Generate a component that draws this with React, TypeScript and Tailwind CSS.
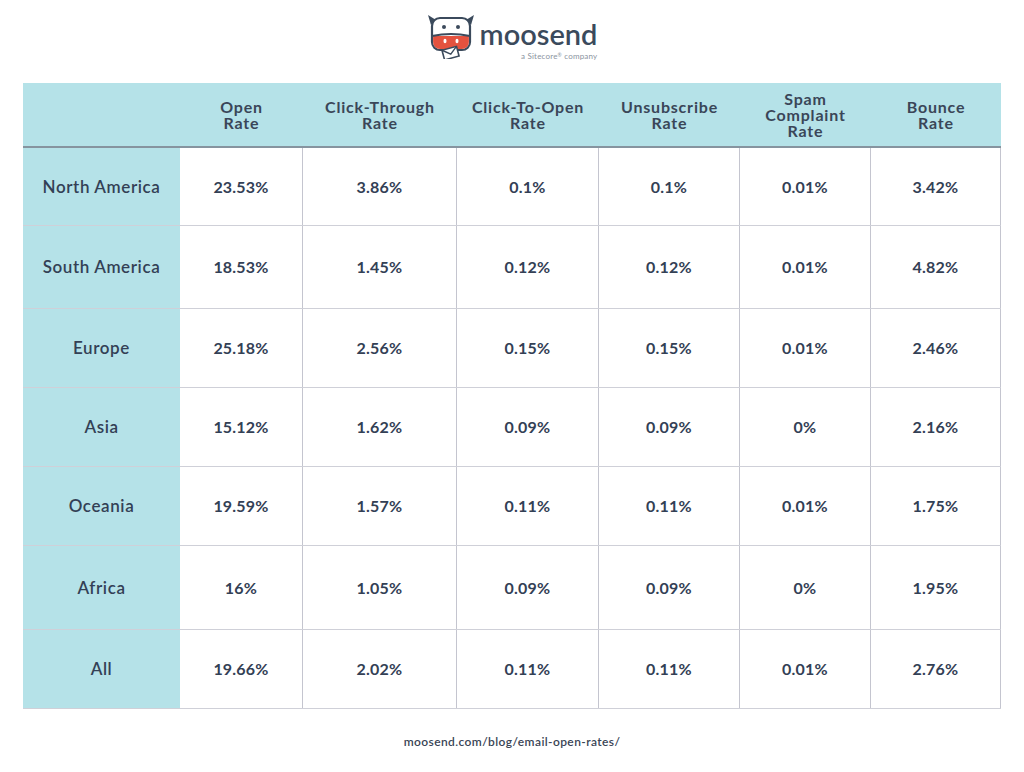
import React from 'react';

const cols = ['w-[157px]', 'w-[123px]', 'w-[154px]', 'w-[142px]', 'w-[141px]', 'w-[131px]', 'w-[130px]'];

const headers = [
  '',
  'Open\nRate',
  'Click-Through\nRate',
  'Click-To-Open\nRate',
  'Unsubscribe\nRate',
  'Spam\nComplaint\nRate',
  'Bounce\nRate',
];

const rows: { h: string; cells: string[] }[] = [
  { h: 'h-[78px]', cells: ['North America', '23.53%', '3.86%', '0.1%', '0.1%', '0.01%', '3.42%'] },
  { h: 'h-[83px]', cells: ['South America', '18.53%', '1.45%', '0.12%', '0.12%', '0.01%', '4.82%'] },
  { h: 'h-[79px]', cells: ['Europe', '25.18%', '2.56%', '0.15%', '0.15%', '0.01%', '2.46%'] },
  { h: 'h-[79px]', cells: ['Asia', '15.12%', '1.62%', '0.09%', '0.09%', '0%', '2.16%'] },
  { h: 'h-[79px]', cells: ['Oceania', '19.59%', '1.57%', '0.11%', '0.11%', '0.01%', '1.75%'] },
  { h: 'h-[84px]', cells: ['Africa', '16%', '1.05%', '0.09%', '0.09%', '0%', '1.95%'] },
  { h: 'h-[79px]', cells: ['All', '19.66%', '2.02%', '0.11%', '0.11%', '0.01%', '2.76%'] },
];

const CowLogo = () => (
  <svg width="48" height="46" viewBox="0 0 48 46" fill="none">
    {/* ears */}
    <path d="M9 7 L1 2 L4 12 Z" fill="#3b4a5c" />
    <path d="M39 7 L47 2 L44 12 Z" fill="#3b4a5c" />
    {/* head */}
    <rect x="5" y="5" width="38" height="32" rx="8" fill="#fff" stroke="#3b4a5c" strokeWidth="2.2" />
    {/* muzzle */}
    <path d="M6.1 23 H41.9 V29 a7 7 0 0 1 -7 7 H13.1 a7 7 0 0 1 -7 -7 Z" fill="#e4523f" />
    <path d="M5 23 Q24 19 43 23" stroke="#3b4a5c" strokeWidth="2" fill="none" />
    {/* eyes */}
    <circle cx="17" cy="14" r="2" fill="#3b4a5c" />
    <circle cx="31" cy="14" r="2" fill="#3b4a5c" />
    {/* nostrils */}
    <ellipse cx="18" cy="28" rx="1.5" ry="2.2" fill="#fff" />
    <ellipse cx="30" cy="28" rx="1.5" ry="2.2" fill="#fff" />
    {/* envelope */}
    <g transform="rotate(-15 24 40)">
      <rect x="16" y="35" width="15" height="10" fill="#fff" stroke="#3b4a5c" strokeWidth="1.6" />
      <path d="M16 35 L23.5 41 L31 35" stroke="#3b4a5c" strokeWidth="1.4" fill="none" />
    </g>
  </svg>
);

export default function App() {
  return (
    <div className="w-[1024px] h-[772px] bg-white font-['Lato','Noto_Sans',sans-serif] text-[#2e3a4d]">
      <div className="flex justify-center pt-[13px] h-[83px]">
        <div className="flex items-start gap-[5px] ml-[0px]">
          <CowLogo />
          <div className="flex flex-col items-end pt-[6px]">
            <span className="text-[29px] leading-[29px] font-semibold text-[#3b4a5c]">moosend</span>
            <span className="text-[8px] leading-[10px] text-[#8a93a0] mt-[3px] tracking-[0.2px]">a Sitecore<sup className="text-[5px]">®</sup> company</span>
          </div>
        </div>
      </div>

      <div className="ml-[23px] w-[978px]">
        <div className="flex h-[65px] bg-[#b5e2e8] border-b-2 border-[#86949f]">
          {headers.map((t, i) => (
            <div key={i} className={`${cols[i]} flex items-center justify-center text-center whitespace-pre-line text-[16px] leading-[16px] font-bold tracking-[0.8px] text-[#3a4658] pt-[1px]`}>
              {t}
            </div>
          ))}
        </div>
        {rows.map((r, ri) => (
          <div key={ri} className={`flex ${r.h} border-b border-[#cfd0d8]`}>
            {r.cells.map((c, ci) => (
              <div
                key={ci}
                className={`${cols[ci]} flex items-center justify-center ${
                  ci === 0
                    ? 'bg-[#b5e2e8] text-[17px] font-semibold tracking-[0.6px] text-[#334055]'
                    : 'bg-white text-[16px] font-bold tracking-[0.2px] text-[#334055] border-r border-[#c4c5cf]'
                }`}
              >
                {c}
              </div>
            ))}
          </div>
        ))}
      </div>

      <div className="text-center mt-[24px] text-[12px] text-[#3a4556] font-semibold tracking-[0.4px]">
        moosend.com/blog/email-open-rates/
      </div>
    </div>
  );
}
